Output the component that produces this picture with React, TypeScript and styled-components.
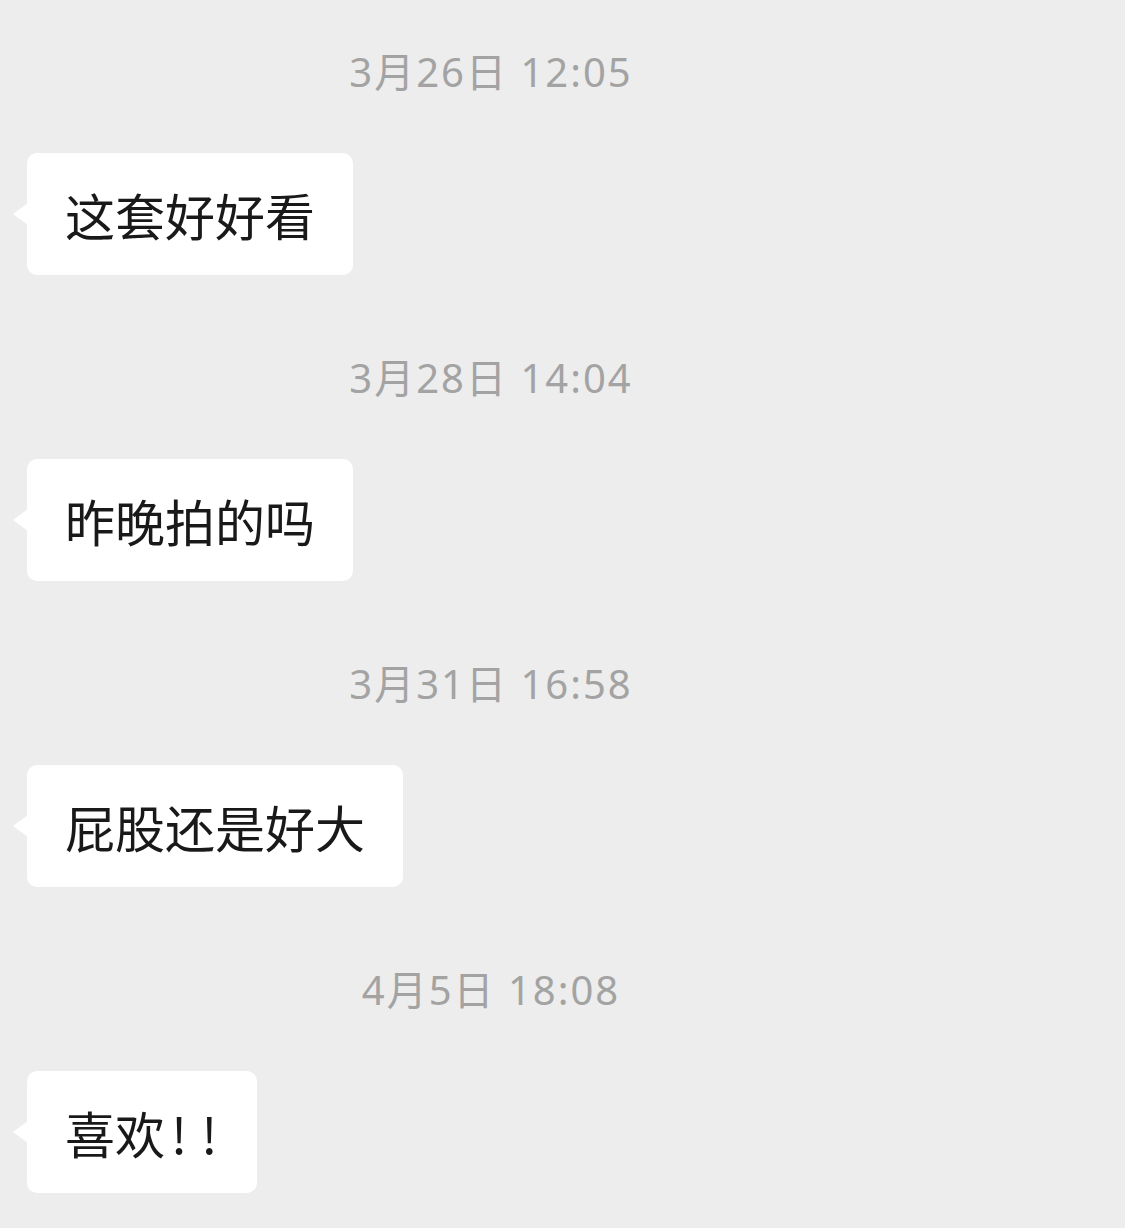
import styled, { createGlobalStyle } from "styled-components";

type Message = { time: string; text: string; bangs?: string };

const messages: Message[] = [
  { time: "3月26日 12:05", text: "这套好好看" },
  { time: "3月28日 14:04", text: "昨晚拍的吗" },
  { time: "3月31日 16:58", text: "屁股还是好大" },
  { time: "4月5日 18:08", text: "喜欢", bangs: "!!" },
];

const App = () => {
  return (
    <>
      <GlobalStyle />
      <Chat>
        {messages.map((m) => (
          <Group key={m.time}>
            <Time>{m.time}</Time>
            <Row>
              <Bubble>
                {m.text}
                {m.bangs && <Bangs>{m.bangs}</Bangs>}
              </Bubble>
            </Row>
          </Group>
        ))}
      </Chat>
    </>
  );
};

export default App;

const GlobalStyle = createGlobalStyle`
  html, body {
    margin: 0;
    padding: 0;
    background: #ededed;
  }
`;

const Chat = styled.div`
  width: 1125px;
  height: 1228px;
  overflow: hidden;
  background: #ededed;
  padding-top: 47px;
  box-sizing: border-box;
  display: flex;
  flex-direction: column;
  gap: 78px;
  font-family: "Noto Sans CJK SC", "Noto Sans", sans-serif;
`;

const Group = styled.div`
  display: flex;
  flex-direction: column;
  gap: 56px;
`;

const Time = styled.div`
  padding-right: 143px;
  text-align: center;
  font-family: "Noto Sans", "Noto Sans CJK SC", sans-serif;
  font-size: 40px;
  letter-spacing: 2px;
  line-height: 50px;
  color: #a3a3a3;
`;

const Row = styled.div`
  display: flex;
  padding-left: 27px;
`;

const Bubble = styled.div`
  position: relative;
  background: #ffffff;
  border-radius: 10px;
  padding: 36px 38px;
  font-size: 50px;
  line-height: 50px;
  color: #191919;
  white-space: nowrap;

  &::before {
    content: "";
    position: absolute;
    left: -14px;
    top: 50%;
    transform: translateY(-50%);
    border-top: 11px solid transparent;
    border-bottom: 11px solid transparent;
    border-right: 15px solid #ffffff;
  }
`;

const Bangs = styled.span`
  padding-left: 6px;
  letter-spacing: 14px;
  margin-right: -12px;
`;
